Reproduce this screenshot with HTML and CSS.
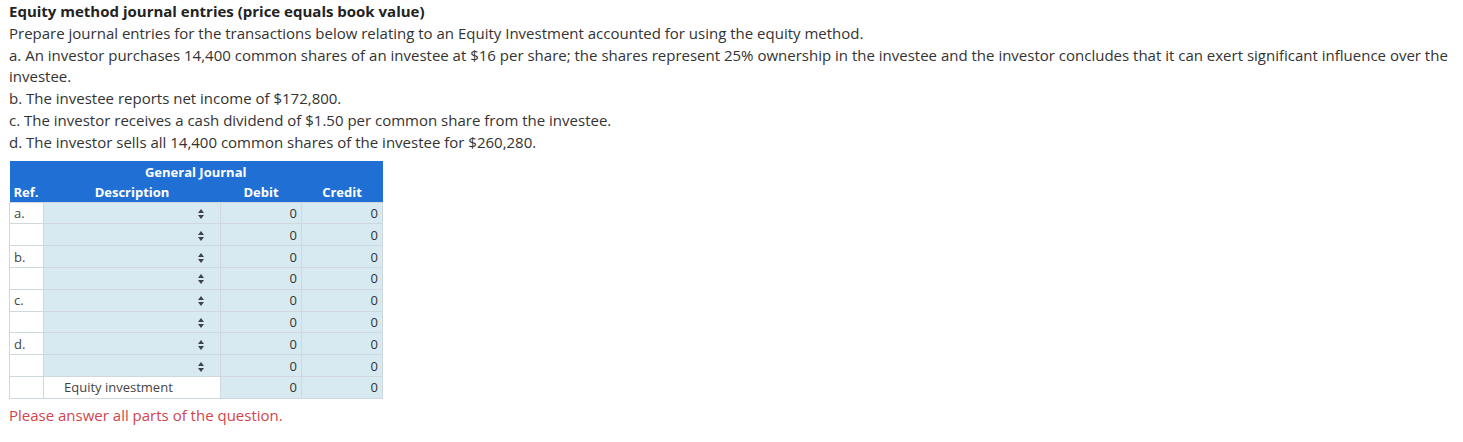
FILE: index.html
```html
<!DOCTYPE html>
<html>
<head>
<meta charset="utf-8">
<link rel="stylesheet" href="styles.css">
</head>
<body>
<div class="page">
  <div class="title">Equity method journal entries (price equals book value)</div>
  <p class="line">Prepare journal entries for the transactions below relating to an Equity Investment accounted for using the equity method.</p>
  <p class="line">a. An investor purchases 14,400 common shares of an investee at $16 per share; the shares represent 25% ownership in the investee and the investor concludes that it can exert significant influence over the investee.</p>
  <p class="line">b. The investee reports net income of $172,800.</p>
  <p class="line">c. The investor receives a cash dividend of $1.50 per common share from the investee.</p>
  <p class="line">d. The investor sells all 14,400 common shares of the investee for $260,280.</p>

  <table class="journal">
    <colgroup>
      <col class="c-ref"><col class="c-desc"><col class="c-num"><col class="c-num">
    </colgroup>
    <thead>
      <tr><th></th><th colspan="2" class="gj">General Journal</th><th></th></tr>
      <tr><th class="left">Ref.</th><th>Description</th><th>Debit</th><th>Credit</th></tr>
    </thead>
    <tbody>
      <tr><td class="ref">a.</td><td class="desc"><span class="arrows"></span></td><td class="num">0</td><td class="num">0</td></tr>
      <tr><td class="ref"></td><td class="desc"><span class="arrows"></span></td><td class="num">0</td><td class="num">0</td></tr>
      <tr><td class="ref">b.</td><td class="desc"><span class="arrows"></span></td><td class="num">0</td><td class="num">0</td></tr>
      <tr><td class="ref"></td><td class="desc"><span class="arrows"></span></td><td class="num">0</td><td class="num">0</td></tr>
      <tr><td class="ref">c.</td><td class="desc"><span class="arrows"></span></td><td class="num">0</td><td class="num">0</td></tr>
      <tr><td class="ref"></td><td class="desc"><span class="arrows"></span></td><td class="num">0</td><td class="num">0</td></tr>
      <tr><td class="ref">d.</td><td class="desc"><span class="arrows"></span></td><td class="num">0</td><td class="num">0</td></tr>
      <tr><td class="ref"></td><td class="desc"><span class="arrows"></span></td><td class="num">0</td><td class="num">0</td></tr>
      <tr><td class="ref"></td><td class="fixed">Equity investment</td><td class="num">0</td><td class="num">0</td></tr>
    </tbody>
  </table>
  <p class="warn">Please answer all parts of the question.</p>
</div>
</body>
</html>
```
FILE: styles.css
```css
html, body {
  margin: 0;
  padding: 0;
  background: #fff;
}
body {
  font-family: "Open Sans", "DejaVu Sans", sans-serif;
  color: #333;
}
.page {
  padding: 1px 8px 0 9px;
  font-size: 15px;
  line-height: 21.8px;
}
.title {
  font-weight: bold;
  color: #222;
}
.line {
  margin: 0;
}
.journal {
  margin-top: 7px;
  border-collapse: collapse;
  table-layout: fixed;
  width: 373px;
  font-size: 13px;
  line-height: 20px;
}
.c-ref { width: 34px; }
.c-desc { width: 177px; }
.c-num { width: 81px; }
.journal thead tr {
  background: #1f6fd5;
}
.journal th {
  color: #fff;
  font-weight: bold;
  height: 20px;
  padding: 0;
  text-align: center;
  border: none;
}
.journal thead tr:first-child th {
  padding-top: 1px;
}
.journal th.left {
  text-align: left;
  padding-left: 4px;
}
.journal th.gj {
  text-align: right;
  padding-right: 55px;
}
.journal td {
  border: 1px solid #cfd8dc;
  height: 20.8px;
  padding: 0;
}
.journal td.ref {
  background: #fff;
  padding-left: 4px;
  color: #444;
}
.journal td.desc {
  background: #d7eaf2;
  text-align: right;
  padding-right: 15px;
}
.journal td.fixed {
  background: #fff;
  padding-left: 20px;
  color: #444;
}
.journal td.num {
  background: #d7eaf2;
  text-align: right;
  padding-right: 4px;
  color: #333;
}
.arrows {
  display: inline-block;
  width: 7px;
  height: 10px;
  vertical-align: -1px;
  position: relative;
}
.arrows::before,
.arrows::after {
  content: "";
  position: absolute;
  left: 0;
  border-left: 3.5px solid transparent;
  border-right: 3.5px solid transparent;
}
.arrows::before {
  top: 0;
  border-bottom: 4px solid #3d4448;
}
.arrows::after {
  bottom: 0;
  border-top: 4px solid #3d4448;
}
.warn {
  margin: 6px 0 0;
  color: #d0454c;
}
```
